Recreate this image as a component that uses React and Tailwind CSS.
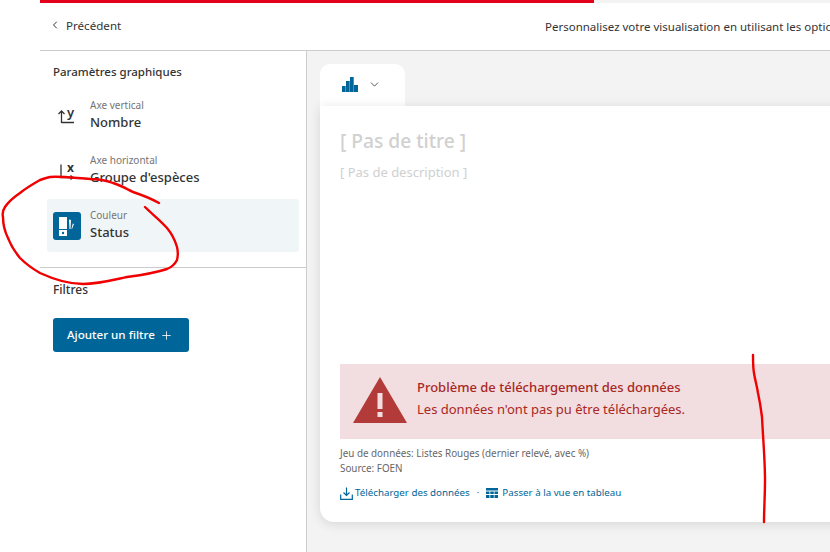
import React from 'react';
import { ChevronLeft, ChevronDown, Plus } from 'lucide-react';

const fieldItems = [
    { label: 'Axe vertical', value: 'Nombre', icon: 'y' },
    { label: 'Axe horizontal', value: "Groupe d'espèces", icon: 'x' },
];

const AxisIcon = ({ letter }) => (
    <svg width="24" height="24" viewBox="0 0 24 24" fill="none" stroke="#333" strokeWidth="1.300">
        {letter === 'y' ? (
            <>
                <path d="M6.500 7v12M3.500 10l3-3 3 3M6.500 18.500H19" />
                <text x="12" y="13" fontSize="13" fontWeight="600" fill="#333" stroke="none" fontFamily="'Noto Sans', sans-serif">y</text>
            </>
        ) : (
            <>
                <path d="M6 5.500v13h12M15.500 16.500l2.500 2-2.500 2" />
                <text x="12" y="12.500" fontSize="12" fontWeight="700" fill="#333" stroke="none" fontFamily="'Noto Sans', sans-serif">x</text>
            </>
        )}
    </svg>
);

const ColorIcon = () => (
    <svg width="28" height="28" viewBox="0 0 28 28">
        <rect width="28" height="28" rx="3" fill="#006699" />
        <rect x="6" y="5" width="8" height="12" fill="#fff" />
        <rect x="6" y="18" width="8" height="6" fill="#fff" />
        <circle cx="10" cy="21" r="1.200" fill="#006699" />
        <path d="M16 7.500 18 8l-.5 9-1 0zM21 12l-1.200-.5-1.300 5 .5.500z" fill="#fff" />
    </svg>
);

const ChartIcon = () => (
    <svg width="16" height="15" viewBox="0 0 16 15" fill="#006699">
        <rect x="0" y="9" width="3.700" height="6" />
        <rect x="4" y="4" width="3.700" height="11" />
        <rect x="8" y="0" width="3.700" height="15" />
        <rect x="12" y="8" width="4" height="7" />
    </svg>
);

const DownloadIcon = () => (
    <svg width="13" height="13" viewBox="0 0 13 13" fill="none" stroke="#006699" strokeWidth="1.200">
        <path d="M6.500.5V8M3.500 5.500l3 3 3-3M.7 7.500v4.800h11.600V7.500" />
    </svg>
);

const TableIcon = () => (
    <svg width="12" height="10" viewBox="0 0 12 10" fill="#006699">
        <rect width="12" height="2.500" />
        <rect y="3.500" width="3.500" height="2.500" />
        <rect x="4.300" y="3.500" width="3.500" height="2.500" />
        <rect x="8.500" y="3.500" width="3.500" height="2.500" />
        <rect y="7" width="3.500" height="3" />
        <rect x="4.300" y="7" width="3.500" height="3" />
        <rect x="8.500" y="7" width="3.500" height="3" />
    </svg>
);

const WarningIcon = () => (
    <svg width="54" height="46" viewBox="0 0 54 46">
        <path d="M27 0 54 46H0z" fill="#b23a38" />
        <rect x="24.500" y="16" width="5" height="16" fill="#f2dde0" />
        <rect x="24.500" y="35" width="5" height="5" fill="#f2dde0" />
    </svg>
);

const App = () => {
    return (
        <div className="relative w-[830px] h-[552px] overflow-hidden bg-white font-['Noto_Sans','Open_Sans',sans-serif] text-[#333]">
            <div className="ml-10 flex flex-col h-full">
                <div className="h-[3px] w-full bg-[#f3f3f3]">
                    <div className="h-full w-[554px] bg-[#e2001a]" />
                </div>

                <div className="h-[48px] flex items-center border-b border-[#cccccc] shrink-0">
                    <div className="w-[267px] shrink-0 flex items-center pl-[9px] gap-[5px] pb-[2px] text-[11.600px]">
                        <ChevronLeft size={12} strokeWidth={2} />
                        <span>Précédent</span>
                    </div>
                    <div className="ml-[238px] whitespace-nowrap text-[11.500px]">
                        Personnalisez votre visualisation en utilisant les options
                    </div>
                </div>

                <div className="flex flex-1 min-h-0">
                    <aside className="w-[267px] shrink-0 border-r border-[#cccccc] flex flex-col">
                        <div className="h-[217px] border-b border-[#cccccc] pt-[14px] pl-[7px] pr-[7px] shrink-0">
                            <h2 className="pl-[6px] text-[11.500px] leading-[14px] font-medium">Paramètres graphiques</h2>
                            <div className="mt-[10px] flex flex-col gap-[2px]">
                                {fieldItems.map((item) => (
                                    <div key={item.value} className="h-[53px] flex items-center gap-[9px] pl-[6px]">
                                        <div className="w-[28px] flex justify-center">
                                            <AxisIcon letter={item.icon} />
                                        </div>
                                        <div className="pb-[2px]">
                                            <div className="text-[10px] leading-[12px] text-[#757575]">{item.label}</div>
                                            <div className="mt-[3px] text-[13px] leading-[17px] font-medium">{item.value}</div>
                                        </div>
                                    </div>
                                ))}
                                <div className="h-[53px] flex items-center gap-[9px] pl-[6px] bg-[#f0f5f8] rounded-[3px]">
                                    <ColorIcon />
                                    <div className="pb-[2px]">
                                        <div className="text-[10px] leading-[12px] text-[#757575]">Couleur</div>
                                        <div className="mt-[3px] text-[13px] leading-[17px] font-medium">Status</div>
                                    </div>
                                </div>
                            </div>
                        </div>
                        <div className="pl-[13px] pt-[15px]">
                            <h2 className="text-[12px] leading-[14px] font-medium">Filtres</h2>
                            <button className="mt-[21px] w-[136px] h-[34px] flex items-center pl-[14px] gap-[5px] bg-[#006699] text-white text-[11.600px] font-medium rounded-[3px]">
                                Ajouter un filtre
                                <Plus size={13} strokeWidth={1.500} />
                            </button>
                        </div>
                    </aside>

                    <main className="flex-1 min-w-0 bg-[#f3f3f3] pt-[13px] pl-[13px]">
                        <div className="w-[85px] h-[42px] bg-white rounded-t-[10px] flex items-center pl-[22px] gap-[10px] pb-[2px]">
                            <ChartIcon />
                            <ChevronDown size={13} strokeWidth={1.500} />
                        </div>
                        <div className="w-[600px] h-[416px] bg-white rounded-bl-[14px] shadow-[0_2px_12px_rgba(0,0,0,0.12)] pt-[20px] pl-[20px] flex flex-col">
                            <div className="text-[19.200px] leading-[30px] text-[#d0d0d0] font-medium">[ Pas de titre ]</div>
                            <div className="mt-[7px] text-[13px] leading-[18px] text-[#d0d0d0]">[ Pas de description ]</div>
                            <div className="mt-[183px] h-[75px] flex items-center bg-[#f2dde0]">
                                <div className="ml-[13px] mb-[3px]">
                                    <WarningIcon />
                                </div>
                                <div className="ml-[10px] mb-[8px]">
                                    <div className="text-[13px] leading-[20px] font-medium text-[#a82824]">Problème de téléchargement des données</div>
                                    <div className="mt-[2px] text-[13px] leading-[20px] text-[#a82824]">Les données n'ont pas pu être téléchargées.</div>
                                </div>
                            </div>
                            <div className="mt-[7px] text-[9.850px] leading-[15px] text-[#666]">
                                <div>Jeu de données: Listes Rouges (dernier relevé, avec %)</div>
                                <div>Source: FOEN</div>
                            </div>
                            <div className="mt-[10px] flex items-center text-[9.750px] leading-[14px] text-[#006699]">
                                <DownloadIcon />
                                <span className="ml-[2px]">Télécharger des données</span>
                                <span className="mx-[7px] text-[#666]">·</span>
                                <TableIcon />
                                <span className="ml-[4px]">Passer à la vue en tableau</span>
                            </div>
                        </div>
                    </main>
                </div>
            </div>

            {/* hand drawn annotations on top of the screenshot */}
            <svg className="absolute inset-0 pointer-events-none" width="830" height="552" fill="none" stroke="#f00000" strokeLinecap="round" strokeLinejoin="round">
                <path
                    strokeWidth="2.400"
                    d="M159 203C150 198 142 195 133 192C125 188 120 185 113 183C105 180 98 179 90 179C75 178 60 176 50 177C45 178 43 179 40 180C33 184 26 188 20 193C14 197 9 201 5 207C3 210 2 213 3 217C3 225 5 232 8 238C11 246 15 252 20 258C26 264 33 269 40 273C53 279 68 284 83 284C98 284 113 280 127 277C142 275 155 273 167 269C172 267 175 264 177 260C178 256 178 251 177 247C175 240 172 234 167 228C160 220 152 214 145 207"
                />
                <path strokeWidth="2.400" d="M753 355C753 362 753 368 754 373C755 380 757 386 758 393C760 402 761 409 762 417C763 438 765 460 765 480C765 495 764 510 764 522" />
            </svg>
        </div>
    );
};

export default App;
